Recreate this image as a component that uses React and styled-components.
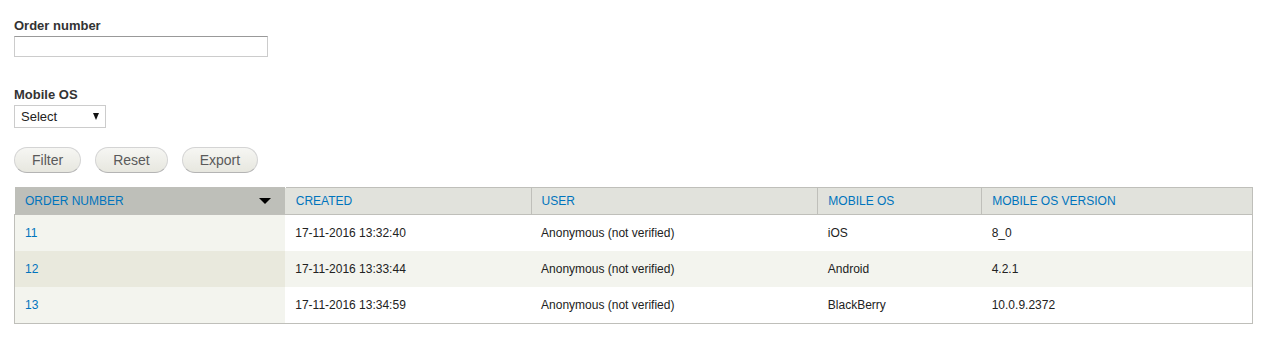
import React from 'react';
import styled, { createGlobalStyle } from 'styled-components';

const GlobalStyle = createGlobalStyle`
  body {
    margin: 0;
    background: #fff;
    font-family: "Liberation Sans", Arial, sans-serif;
    color: #333;
  }
`;

const Page = styled.div`
  padding: 18px 14px 0;
`;

const FormItem = styled.div`
  margin-bottom: ${(p) => p.$gap}px;
`;

const Label = styled.label`
  display: block;
  font-size: 13px;
  font-weight: bold;
  line-height: 16px;
  margin-bottom: ${(p) => p.$gap}px;
  color: #333;
`;

const TextInput = styled.input`
  display: block;
  box-sizing: border-box;
  width: 254px;
  height: 21px;
  margin: 0;
  padding: 2px 4px;
  border: 1px solid #ccc;
  border-top-color: #999;
  border-radius: 0;
  font: 13px "Liberation Sans", Arial, sans-serif;
`;

const SelectBox = styled.div`
  position: relative;
  box-sizing: border-box;
  width: 92px;
  height: 23px;
  border: 1px solid #ccc;
  padding: 0 6px;
  display: flex;
  align-items: center;
  justify-content: space-between;
  font-size: 13px;
  color: #222;
`;

const Caret = styled.span`
  width: 0;
  height: 0;
  border-left: 3.5px solid transparent;
  border-right: 3.5px solid transparent;
  border-top: 7px solid #111;
`;

const Actions = styled.div`
  display: flex;
  gap: 14px;
  margin-bottom: 14px;
`;

const Button = styled.button`
  box-sizing: border-box;
  height: 26px;
  padding: 0 17px;
  border: 1px solid #d4d4d4;
  border-bottom-color: #b4b4b4;
  border-radius: 20px;
  background: linear-gradient(to bottom, #f6f6f3, #e7e7df);
  color: #5a5a5a;
  font: 14px "Liberation Sans", Arial, sans-serif;
  line-height: 24px;
  cursor: pointer;
`;

const Table = styled.table`
  width: 1239px;
  border-collapse: collapse;
  border: 1px solid #bfbfba;
  font-size: 12px;
`;

const Th = styled.th`
  box-sizing: border-box;
  width: ${(p) => p.$w}px;
  height: 27px;
  padding: 0 10px;
  text-align: left;
  font-weight: normal;
  text-transform: uppercase;
  color: #0074bd;
  background: ${(p) => (p.$active ? '#bebfb9' : '#e1e2dc')};
  border-left: 1px solid ${(p) => (p.$sep ? '#bfbfba' : 'transparent')};
  border-bottom: 1px solid #bfbfba;
`;

const HeadInner = styled.div`
  display: flex;
  align-items: center;
  justify-content: space-between;
`;

const SortArrow = styled.span`
  width: 0;
  height: 0;
  margin-right: 4px;
  border-left: 6px solid transparent;
  border-right: 6px solid transparent;
  border-top: 6px solid #000;
`;

const Row = styled.tr`
  background: ${(p) => (p.$even ? '#f3f4ee' : '#fff')};
`;

const Td = styled.td`
  height: 36px;
  padding: 0 10px;
  color: #222;
  background: ${(p) => (p.$active ? (p.$even ? '#e9e9dd' : '#f3f4ee') : 'transparent')};
`;

const Link = styled.a`
  color: #0074bd;
  text-decoration: none;
`;

const columns = [
  { label: 'Order number', w: 271, active: true },
  { label: 'Created', w: 246 },
  { label: 'User', w: 287, sep: true },
  { label: 'Mobile OS', w: 164, sep: true },
  { label: 'Mobile OS version', w: 271, sep: true },
];

const rows = [
  ['11', '17-11-2016 13:32:40', 'Anonymous (not verified)', 'iOS', '8_0'],
  ['12', '17-11-2016 13:33:44', 'Anonymous (not verified)', 'Android', '4.2.1'],
  ['13', '17-11-2016 13:34:59', 'Anonymous (not verified)', 'BlackBerry', '10.0.9.2372'],
];

export default function App() {
  return (
    <>
      <GlobalStyle />
      <Page>
        <FormItem $gap={30}>
          <Label $gap={2}>Order number</Label>
          <TextInput type="text" />
        </FormItem>
        <FormItem $gap={19}>
          <Label $gap={2}>Mobile OS</Label>
          <SelectBox>
            <span>Select</span>
            <Caret />
          </SelectBox>
        </FormItem>
        <Actions>
          <Button>Filter</Button>
          <Button>Reset</Button>
          <Button>Export</Button>
        </Actions>
        <Table>
          <thead>
            <tr>
              {columns.map((c) => (
                <Th key={c.label} $w={c.w} $active={c.active} $sep={c.sep}>
                  <HeadInner>
                    <Link href="#">{c.label}</Link>
                    {c.active && <SortArrow />}
                  </HeadInner>
                </Th>
              ))}
            </tr>
          </thead>
          <tbody>
            {rows.map((r, i) => (
              <Row key={r[0]} $even={i % 2 === 1}>
                {r.map((cell, j) => (
                  <Td key={j} $active={j === 0} $even={i % 2 === 1}>
                    {j === 0 ? <Link href="#">{cell}</Link> : cell}
                  </Td>
                ))}
              </Row>
            ))}
          </tbody>
        </Table>
      </Page>
    </>
  );
}
